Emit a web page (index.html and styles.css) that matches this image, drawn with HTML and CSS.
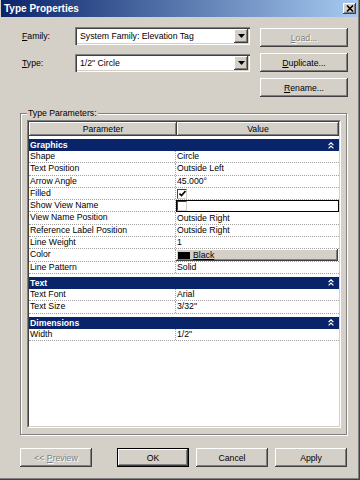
FILE: index.html
```html
<!DOCTYPE html>
<html lang="en">
<head>
  <meta charset="UTF-8">
  <title>Type Properties</title>
  <link rel="stylesheet" href="styles.css">
</head>
<body>
<div class="window">
  <div class="titlebar">
    <span class="title">Type Properties</span>
    <span class="close">
      <svg width="8" height="7" viewBox="0 0 8 7"><path d="M1 0.5 L7 6.5 M7 0.5 L1 6.5" stroke="#000" stroke-width="1.6"/></svg>
    </span>
  </div>

  <div class="top">
    <div class="fields">
      <div class="field">
        <label><u>F</u>amily:</label>
        <div class="combo">
          <span class="combo-text">System Family: Elevation Tag</span>
          <span class="drop"><svg width="7" height="4" viewBox="0 0 7 4"><polygon points="0,0 7,0 3.5,4" fill="#000"/></svg></span>
        </div>
      </div>
      <div class="field">
        <label><u>T</u>ype:</label>
        <div class="combo">
          <span class="combo-text">1/2" Circle</span>
          <span class="drop"><svg width="7" height="4" viewBox="0 0 7 4"><polygon points="0,0 7,0 3.5,4" fill="#000"/></svg></span>
        </div>
      </div>
    </div>
    <div class="side-buttons">
      <button class="btn" disabled><u>L</u>oad...</button>
      <button class="btn"><u>D</u>uplicate...</button>
      <button class="btn"><u>R</u>ename...</button>
    </div>
  </div>

  <fieldset class="group">
    <legend>Type Parameters:</legend>
    <div class="grid-frame">
      <div class="grid">
        <div class="grid-head">
          <div class="hcell">Parameter</div>
          <div class="hcell">Value</div>
        </div>

        <div class="band"><span>Graphics</span>
          <svg width="6" height="7" viewBox="0 0 6 7"><path d="M0.6 3.2 L3 0.8 L5.4 3.2 M0.6 6.4 L3 4 L5.4 6.4" stroke="#fff" stroke-width="1.2" fill="none"/></svg>
        </div>
        <div class="row"><div class="pcell">Shape</div><div class="vcell">Circle</div></div>
        <div class="row"><div class="pcell">Text Position</div><div class="vcell">Outside Left</div></div>
        <div class="row"><div class="pcell">Arrow Angle</div><div class="vcell">45.000°</div></div>
        <div class="row"><div class="pcell">Filled</div><div class="vcell"><span class="check">
          <svg width="7" height="7" viewBox="0 0 7 7"><path d="M0.5 3.5 L2.5 5.5 L6.5 1" stroke="#000" stroke-width="1.6" fill="none"/></svg>
        </span></div></div>
        <div class="row"><div class="pcell">Show View Name</div><div class="vcell editing"><span class="check"></span></div></div>
        <div class="row"><div class="pcell">View Name Position</div><div class="vcell">Outside Right</div></div>
        <div class="row"><div class="pcell">Reference Label Position</div><div class="vcell">Outside Right</div></div>
        <div class="row"><div class="pcell">Line Weight</div><div class="vcell">1</div></div>
        <div class="row"><div class="pcell">Color</div><div class="vcell color-btn"><span class="swatch"></span><u>Black</u></div></div>
        <div class="row"><div class="pcell">Line Pattern</div><div class="vcell">Solid</div></div>

        <div class="band"><span>Text</span>
          <svg width="6" height="7" viewBox="0 0 6 7"><path d="M0.6 3.2 L3 0.8 L5.4 3.2 M0.6 6.4 L3 4 L5.4 6.4" stroke="#fff" stroke-width="1.2" fill="none"/></svg>
        </div>
        <div class="row"><div class="pcell">Text Font</div><div class="vcell">Arial</div></div>
        <div class="row"><div class="pcell">Text Size</div><div class="vcell">3/32"</div></div>

        <div class="band"><span>Dimensions</span>
          <svg width="6" height="7" viewBox="0 0 6 7"><path d="M0.6 3.2 L3 0.8 L5.4 3.2 M0.6 6.4 L3 4 L5.4 6.4" stroke="#fff" stroke-width="1.2" fill="none"/></svg>
        </div>
        <div class="row"><div class="pcell">Width</div><div class="vcell">1/2"</div></div>
      </div>
    </div>
  </fieldset>

  <div class="bottom">
    <button class="btn wide" disabled>&lt;&lt; <u>P</u>review</button>
    <button class="btn wide default">OK</button>
    <button class="btn wide">Cancel</button>
    <button class="btn wide">Apply</button>
  </div>
</div>
</body>
</html>
```

FILE: styles.css
```css
body {
    margin: 0;
}

.window {
    width: 360px;
    height: 480px;
    box-sizing: border-box;
    padding: 0 2px 0 1px;
    background-color: #d4d0c8;
    box-shadow: inset -1px -1px 0 #404040, inset -2px -2px 0 #808080;
    font-family: "Liberation Sans", Arial, sans-serif;
    font-size: 8.7px;
    color: #000;
}

/* title bar */
.titlebar {
    height: 17px;
    display: flex;
    align-items: center;
    justify-content: space-between;
    padding: 0 2px 0 3px;
    background: linear-gradient(to right, #0a246a, #a6caf0);
}
.title {
    color: #fff;
    font-weight: bold;
    font-size: 10px;
}
.close {
    width: 13px;
    height: 11px;
    display: flex;
    align-items: center;
    justify-content: center;
    background-color: #d4d0c8;
    box-shadow: inset -1px -1px 0 #404040, inset 1px 1px 0 #fff, inset -2px -2px 0 #808080;
}

/* family / type */
.top {
    display: flex;
    margin-top: 10px;
    padding-left: 21px;
}
.fields {
    display: flex;
    flex-direction: column;
    gap: 9px;
}
.field {
    display: flex;
    align-items: center;
    height: 18px;
}
.field label {
    width: 53px;
}
.combo {
    width: 175px;
    height: 18px;
    box-sizing: border-box;
    padding: 2px;
    display: flex;
    align-items: center;
    background-color: #fff;
    box-shadow: inset 1px 1px 0 #808080, inset 2px 2px 0 #404040, inset -1px -1px 0 #fff, inset -2px -2px 0 #d4d0c8;
}
.combo-text {
    flex: 1;
    padding-left: 3px;
}
.drop {
    width: 14px;
    height: 14px;
    display: flex;
    align-items: center;
    justify-content: center;
    background-color: #d4d0c8;
    box-shadow: inset -1px -1px 0 #404040, inset 1px 1px 0 #fff, inset -2px -2px 0 #808080;
}

.side-buttons {
    display: flex;
    flex-direction: column;
    gap: 6px;
    margin: 1px 0 0 10px;
}

/* buttons */
.btn {
    width: 88px;
    height: 19px;
    padding: 0;
    border: none;
    font: inherit;
    color: #000;
    background-color: #d4d0c8;
    box-shadow: inset -1px -1px 0 #404040, inset 1px 1px 0 #fff, inset -2px -2px 0 #808080;
}
.btn:disabled {
    color: #808080;
    text-shadow: 1px 1px 0 #fff;
}
.btn.wide {
    width: 72px;
}
.btn.default {
    box-shadow: inset 0 0 0 1px #000, inset -2px -2px 0 #404040, inset 2px 2px 0 #fff, inset -3px -3px 0 #808080;
}

/* type parameters */
.group {
    margin: 11px 0 0 19px;
    padding: 1px 5px 0 6px;
    width: 327px;
    height: 327px;
    box-sizing: border-box;
    border: 1px solid #808080;
    box-shadow: 1px 1px 0 #fff, inset 1px 1px 0 #fff;
}
.group legend {
    padding: 0 1px;
    margin-left: 0;
    line-height: 11px;
    background-color: #d4d0c8;
}

.grid-frame {
    height: 308px;
    box-sizing: border-box;
    border: 1px solid;
    border-color: #808080 #fff #fff #808080;
}
.grid {
    height: 100%;
    box-sizing: border-box;
    border: 1px solid;
    border-color: #404040 #d4d0c8 #d4d0c8 #404040;
    background-color: #fff;
}

.grid-head {
    display: grid;
    grid-template-columns: 148px 1fr;
    height: 14px;
}
.hcell {
    line-height: 14px;
    text-align: center;
    background-color: #d4d0c8;
    box-shadow: inset -1px -1px 0 #404040, inset 1px 1px 0 #fff, inset -2px -2px 0 #808080;
}

.band {
    display: flex;
    align-items: center;
    justify-content: space-between;
    height: 12px;
    margin-top: 3px;
    padding: 0 5px 0 1px;
    background-color: #0a246a;
    color: #fff;
    font-weight: bold;
}

.row {
    display: grid;
    grid-template-columns: 147px 1fr;
    height: 12.3px;
    box-sizing: border-box;
    border-bottom: 1px dotted #a0a0a0;
    line-height: 11px;
}
.pcell {
    padding-left: 1px;
    border-right: 1px dotted #a0a0a0;
    white-space: nowrap;
}
.vcell {
    display: flex;
    align-items: center;
    padding-left: 1px;
}
.vcell.editing {
    box-shadow: inset 0 0 0 1px #000;
    margin-bottom: -1px;
}
.vcell.color-btn {
    gap: 3px;
    background-color: #d4d0c8;
    box-shadow: inset -1px -1px 0 #404040, inset 1px 1px 0 #fff, inset -2px -2px 0 #808080;
    padding-left: 2px;
    margin-right: 1px;
}

.check {
    width: 10px;
    height: 10px;
    box-sizing: border-box;
    display: flex;
    align-items: center;
    justify-content: center;
    background-color: #fff;
    border: 1px solid;
    border-color: #404040 #d4d0c8 #d4d0c8 #404040;
}
.swatch {
    width: 12px;
    height: 7px;
    background-color: #000;
}

/* dialog buttons */
.bottom {
    display: flex;
    gap: 7px;
    margin: 13px 0 0 19px;
}
.bottom .default {
    margin-left: 18px;
}
```
